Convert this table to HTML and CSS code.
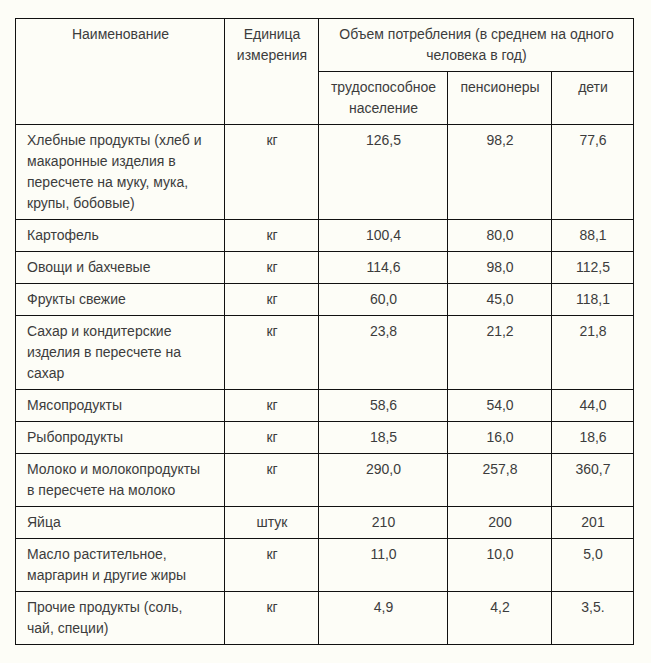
FILE: index.html
```html
<!DOCTYPE html>
<html lang="ru">
<head>
<meta charset="utf-8">
<link rel="stylesheet" href="styles.css">
</head>
<body>
<table class="norms">
  <colgroup>
    <col class="c-name">
    <col class="c-unit">
    <col class="c-work">
    <col class="c-pens">
    <col class="c-kids">
  </colgroup>
  <thead>
    <tr>
      <th rowspan="2">Наименование</th>
      <th rowspan="2">Единица измерения</th>
      <th colspan="3">Объем потребления (в среднем на одного человека в год)</th>
    </tr>
    <tr>
      <th>трудоспособное население</th>
      <th>пенсионеры</th>
      <th>дети</th>
    </tr>
  </thead>
  <tbody>
    <tr><td class="name">Хлебные продукты (хлеб и макаронные изделия в пересчете на муку, мука, крупы, бобовые)</td><td>кг</td><td>126,5</td><td>98,2</td><td>77,6</td></tr>
    <tr><td class="name">Картофель</td><td>кг</td><td>100,4</td><td>80,0</td><td>88,1</td></tr>
    <tr><td class="name">Овощи и бахчевые</td><td>кг</td><td>114,6</td><td>98,0</td><td>112,5</td></tr>
    <tr><td class="name">Фрукты свежие</td><td>кг</td><td>60,0</td><td>45,0</td><td>118,1</td></tr>
    <tr><td class="name">Сахар и кондитерские изделия в пересчете на сахар</td><td>кг</td><td>23,8</td><td>21,2</td><td>21,8</td></tr>
    <tr><td class="name">Мясопродукты</td><td>кг</td><td>58,6</td><td>54,0</td><td>44,0</td></tr>
    <tr><td class="name">Рыбопродукты</td><td>кг</td><td>18,5</td><td>16,0</td><td>18,6</td></tr>
    <tr><td class="name">Молоко и молокопродукты в пересчете на молоко</td><td>кг</td><td>290,0</td><td>257,8</td><td>360,7</td></tr>
    <tr><td class="name">Яйца</td><td>штук</td><td>210</td><td>200</td><td>201</td></tr>
    <tr><td class="name">Масло растительное, маргарин и другие жиры</td><td>кг</td><td>11,0</td><td>10,0</td><td>5,0</td></tr>
    <tr><td class="name">Прочие продукты (соль, чай, специи)</td><td>кг</td><td>4,9</td><td>4,2</td><td>3,5.</td></tr>
  </tbody>
</table>
</body>
</html>
```

FILE: styles.css
```css
html, body {
  background: #fdfdf7;
}
body {
  margin: 0;
  padding: 18px 0 0 15px;
  font-family: "Liberation Sans", Arial, sans-serif;
  font-size: 14px;
  color: #3c3c3c;
}
.norms {
  border-collapse: collapse;
  table-layout: fixed;
  width: 618px;
}
.c-name { width: 209px; }
.c-unit { width: 94px; }
.c-work { width: 129px; }
.c-pens { width: 104px; }
.c-kids { width: 82px; }
.norms th,
.norms td {
  border: 1px solid #111;
  padding: 5px 10px 5px 11px;
  line-height: 21px;
  vertical-align: top;
  text-align: center;
  font-weight: normal;
}
.norms td.name {
  text-align: left;
  padding-right: 19px;
}
```
